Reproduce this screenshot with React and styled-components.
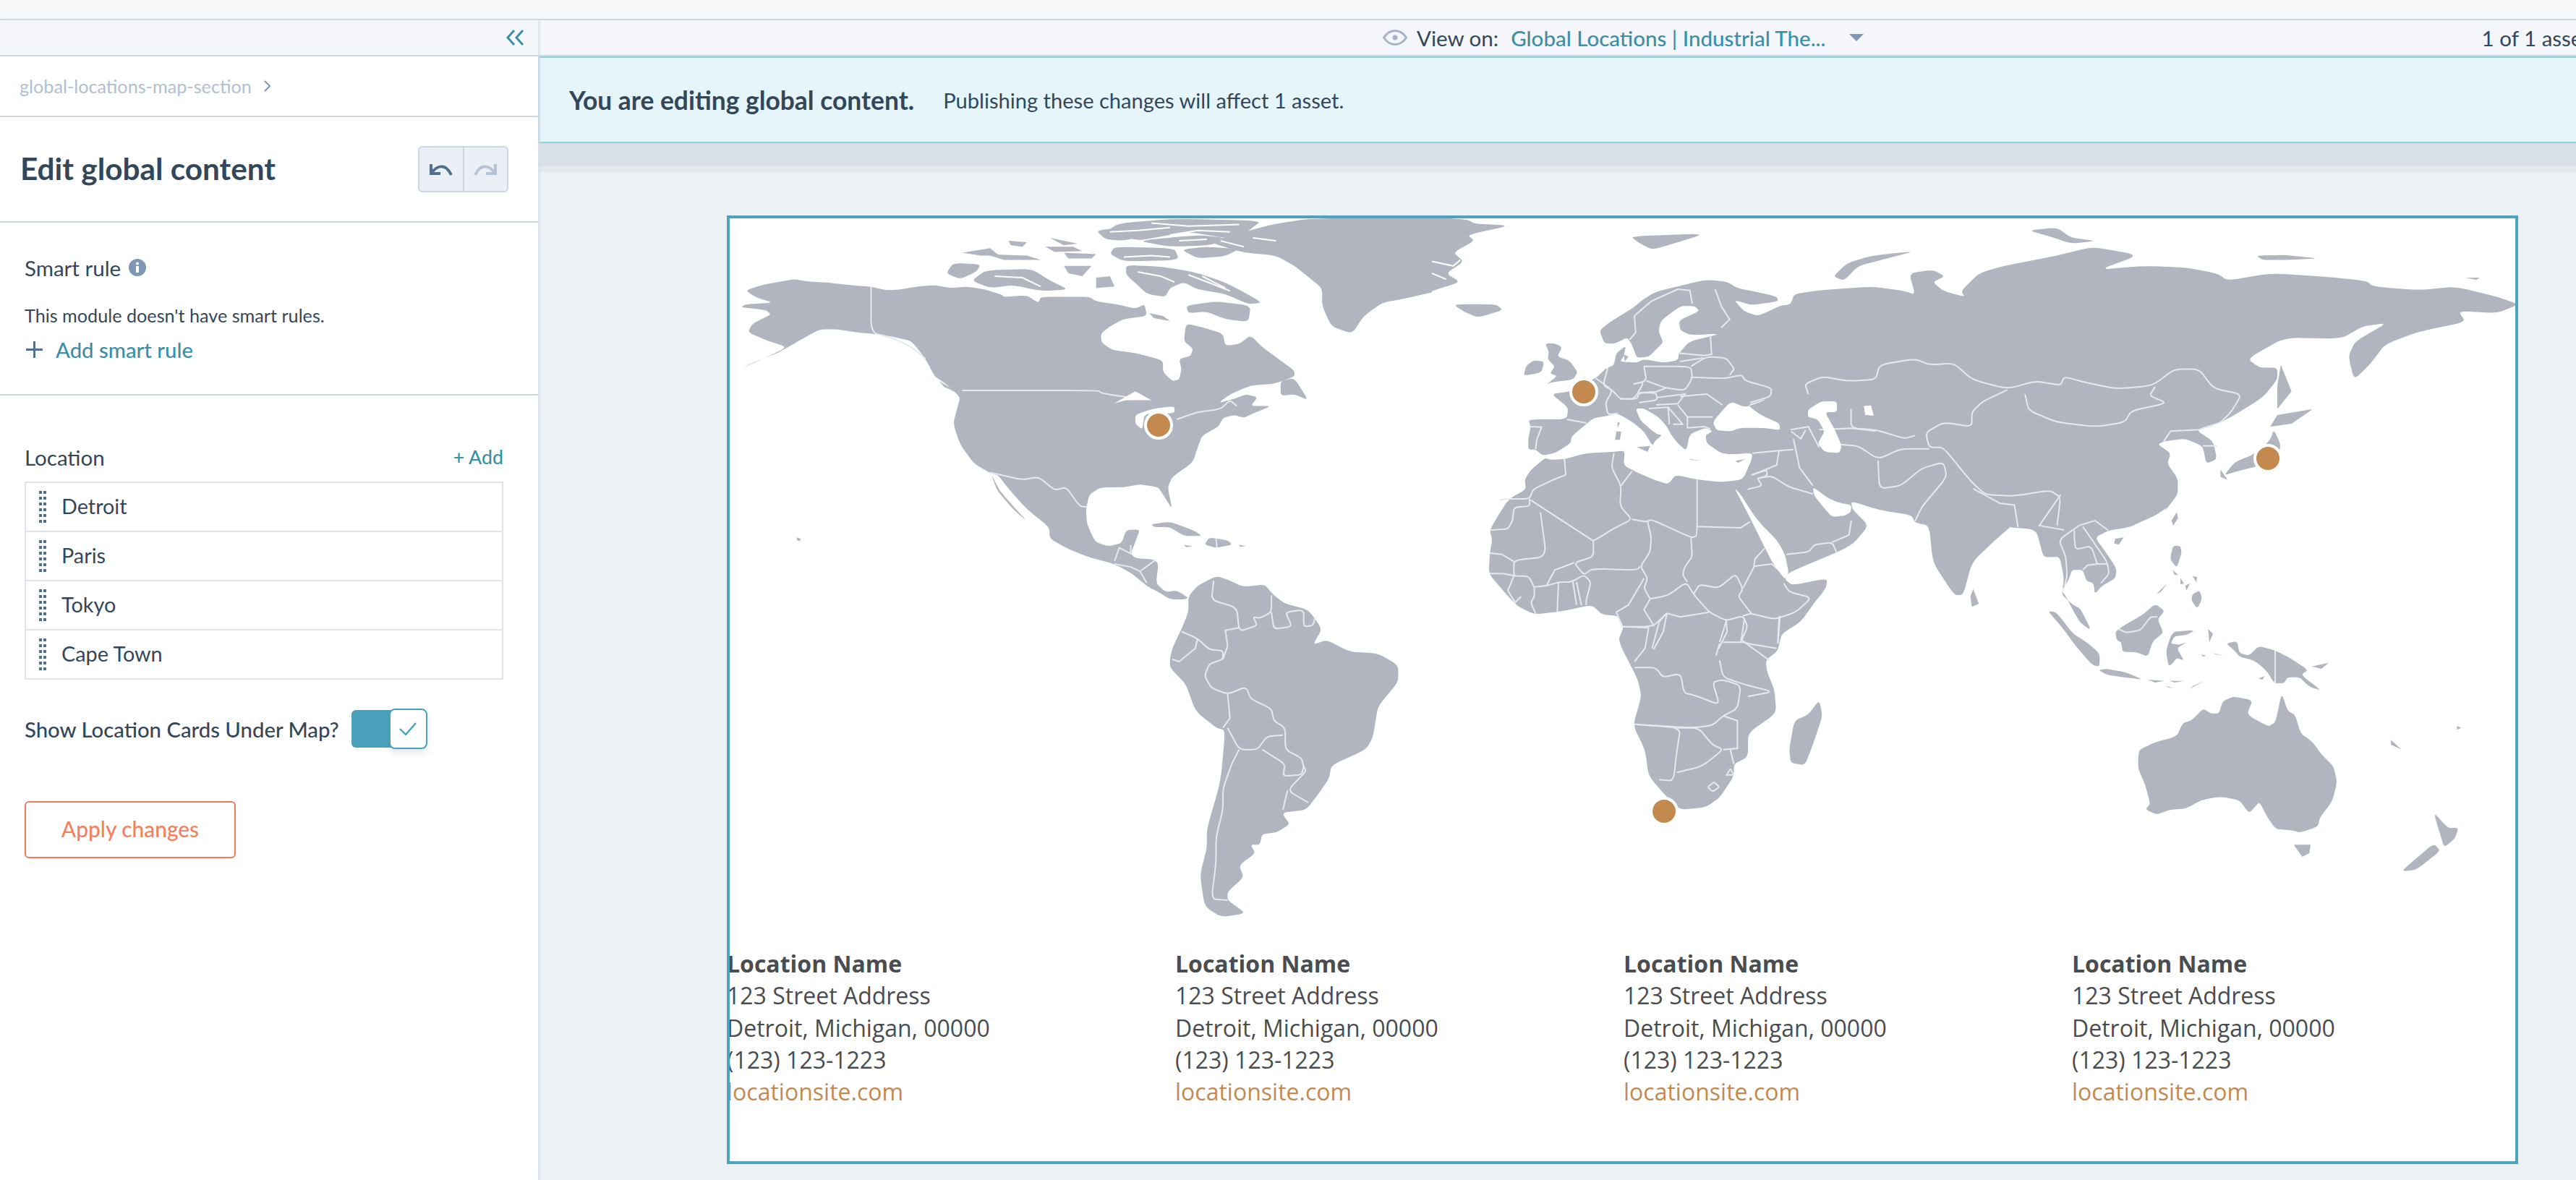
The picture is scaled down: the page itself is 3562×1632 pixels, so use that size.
import React from "react";
import styled, { createGlobalStyle } from "styled-components";

const GlobalStyle = createGlobalStyle`
  html, body {
    margin: 0;
    padding: 0;
    background: #f7f8fa;
    font-family: Lato, "Open Sans", sans-serif;
    color: #33475b;
  }
`;

const Page = styled.div`
  width: 3562px;
  height: 1632px;
  overflow: hidden;
  display: flex;
  flex-direction: column;
`;

const TopStrip = styled.div`
  height: 26px;
  flex: none;
  background: #f7f8fa;
  border-bottom: 2px solid #cbd6e2;
`;

const Body = styled.div`
  flex: 1;
  min-height: 0;
  display: flex;
`;

const Sidebar = styled.aside`
  width: 744px;
  flex: none;
  background: #fff;
  box-shadow: 2px 0 4px #d5dde6;
  position: relative;
  z-index: 2;
`;

const CollapseBar = styled.div`
  height: 48px;
  background: #f5f6fa;
  border-bottom: 2px solid #cbd6e2;
  display: flex;
  align-items: center;
  justify-content: flex-end;
  padding-right: 19px;
`;

const Crumb = styled.div`
  height: 82px;
  border-bottom: 2px solid #cbd6e2;
  display: flex;
  align-items: center;
  gap: 17px;
  padding-left: 27px;
  font-size: 25.2px;
  color: #b0c0d2;
`;

const TitleRow = styled.div`
  height: 144px;
  border-bottom: 2px solid #cbd6e2;
  display: flex;
  align-items: center;
  justify-content: space-between;
  padding: 0 41px 0 28px;
`;

const Title = styled.h1`
  margin: 0 0 3px;
  font-size: 42.3px;
  font-weight: 700;
  color: #33475b;
`;

const HistoryGroup = styled.div`
  display: flex;
  width: 125px;
  height: 64px;
  box-sizing: border-box;
  border: 2px solid #cbd6e2;
  border-radius: 6px;
  background: #eaf0f6;
  overflow: hidden;
`;

const HistoryButton = styled.div`
  flex: 1;
  display: flex;
  align-items: center;
  justify-content: center;
  & + & {
    border-left: 2px solid #cbd6e2;
  }
`;

const SmartSection = styled.section`
  height: 239px;
  box-sizing: border-box;
  padding: 45px 0 0 34px;
  border-bottom: 2px solid #cbd6e2;
`;

const SectionLabel = styled.div`
  display: flex;
  align-items: center;
  gap: 11px;
  height: 34px;
  font-size: 29.5px;
  color: #33475b;
`;

const Hint = styled.div`
  margin-top: 34px;
  height: 30px;
  line-height: 30px;
  font-size: 25.2px;
  color: #33475b;
`;

const AddRule = styled.div`
  margin-top: 17px;
  height: 30px;
  display: flex;
  align-items: center;
  gap: 18px;
  padding-left: 2px;
  font-size: 29.3px;
  font-weight: 500;
  color: #3a8fa9;
`;

const FieldSection = styled.section`
  padding: 69px 48px 0 34px;
`;

const FieldHead = styled.div`
  display: flex;
  align-items: center;
  justify-content: space-between;
  height: 34px;
  box-sizing: border-box;
  padding-bottom: 2px;
  font-size: 29.5px;
`;

const AddLink = styled.span`
  font-size: 26.7px;
  font-weight: 500;
  color: #3a8fa9;
`;

const RepeaterList = styled.div`
  margin-top: 16px;
  border: 2px solid #dfe3eb;
  border-bottom: 0;
`;

const RepeaterRow = styled.div`
  height: 68px;
  box-sizing: border-box;
  display: flex;
  align-items: center;
  gap: 21px;
  padding-left: 18px;
  border-bottom: 2px solid #dfe3eb;
  font-size: 28.8px;
  color: #33475b;
`;

const RowLabel = styled.span`
  margin-bottom: 2px;
`;

const DragHandle = styled.div`
  display: grid;
  grid-template-columns: 4px 4px;
  grid-auto-rows: 4px;
  gap: 4px 2px;
  & > i {
    background: #516f90;
  }
`;

const ToggleRow = styled.div`
  margin-top: 40px;
  display: flex;
  align-items: center;
  gap: 17px;
  height: 56px;
  font-size: 29.3px;
  font-weight: 500;
  color: #33475b;
`;

const Toggle = styled.div`
  position: relative;
  width: 105px;
  height: 52px;
  border-radius: 6px 8px 8px 6px;
  background: linear-gradient(to right, #4ba1bb 60px, transparent 60px);
`;

const ToggleKnob = styled.div`
  position: absolute;
  top: -2px;
  right: 0;
  width: 53px;
  height: 56px;
  box-sizing: border-box;
  background: #fff;
  border: 2px solid #4ba1bb;
  border-radius: 8px;
  box-shadow: 0 6px 10px rgba(45, 62, 80, 0.12);
  display: flex;
  align-items: center;
  justify-content: center;
`;

const ApplyButton = styled.button`
  display: block;
  margin-top: 72px;
  width: 292px;
  height: 79px;
  box-sizing: border-box;
  padding: 0 0 3px;
  background: #fff;
  border: 2px solid #f2795c;
  border-radius: 6px;
  font-family: inherit;
  font-size: 29.9px;
  font-weight: 500;
  color: #f2815f;
`;

const Main = styled.main`
  flex: 1;
  min-width: 0;
  display: flex;
  flex-direction: column;
  background: #ecf1f6;
`;

const Toolbar = styled.div`
  height: 48px;
  flex: none;
  background: #f4f6fa;
  border-bottom: 2px solid #cbd6e2;
  display: flex;
  align-items: center;
  padding-left: 1168px;
  white-space: nowrap;
  font-size: 29.5px;
  overflow: hidden;
  & > * {
    flex: none;
  }
`;

const ViewOn = styled.span`
  margin-left: 13px;
`;

const PageLink = styled.span`
  margin-left: 17px;
  font-weight: 500;
  color: #3a8fa9;
`;

const Caret = styled.span`
  margin-left: 32px;
  width: 0;
  height: 0;
  border-left: 10px solid transparent;
  border-right: 10px solid transparent;
  border-top: 10px solid #7c98b6;
`;

const AssetCount = styled.span`
  margin-left: 855px;
`;

const Banner = styled.div`
  height: 120px;
  flex: none;
  box-sizing: border-box;
  background: #e5f5fa;
  border: 2px solid #8fd0dd;
  border-right: 0;
  display: flex;
  align-items: center;
  gap: 40px;
  padding-left: 41px;
`;

const BannerLead = styled.strong`
  font-size: 35.4px;
  font-weight: 700;
  color: #33475b;
`;

const BannerNote = styled.span`
  font-size: 29.1px;
  color: #33475b;
`;

const BannerShade = styled.div`
  flex: none;
  height: 32px;
  background: #d9e0e8;
  border-bottom: 8px solid #e5e9ef;
`;

const Canvas = styled.div`
  flex: 1;
  min-height: 0;
  padding: 60px 0 0 261px;
`;

const Preview = styled.div`
  position: relative;
  width: 2477px;
  height: 1312px;
  background: #fff;
`;

const EditFrame = styled.div`
  position: absolute;
  inset: 0;
  border: 4px solid #4ba3bd;
  pointer-events: none;
  z-index: 1;
`;

const MapSvg = styled.svg`
  display: block;
  width: 2477px;
  height: 1013px;
`;

const CardGrid = styled.div`
  display: grid;
  grid-template-columns: repeat(4, 620px);
  font-family: "Open Sans", sans-serif;
  font-size: 32px;
  line-height: 44.3px;
  color: #4a4d50;
`;

const CardName = styled.div`
  font-weight: 700;
`;

const CardLink = styled.div`
  color: #c4894f;
`;

// coordinate frames the map outlines were traced in, mapped back to page pixels
const FRAMES = {
  a: { x: 980, sx: 1.568, y: 280, sy: 2.45 },
  b: { x: 980, sx: 1.568, y: 780, sy: 3 },
  c: { x: 1980, sx: 1.018, y: 280, sy: 2.45 },
  d: { x: 1980, sx: 1.018, y: 780, sy: 3 },
  e: { x: 2060, sx: 3, y: 400, sy: 3 },
  f: { x: 2780, sx: 3, y: 700, sy: 3 },
};

const toPoints = (spec) => {
  let frame = null;
  const out = [];
  spec
    .trim()
    .split(/\s+/)
    .forEach((tok) => {
      if (FRAMES[tok]) {
        frame = FRAMES[tok];
        return;
      }
      const [x, y] = tok.split(",").map(Number);
      out.push([frame.x + x / frame.sx, frame.y + y / frame.sy]);
    });
  return out;
};

const fmt = (p) => `${p[0].toFixed(1)} ${p[1].toFixed(1)}`;
const lerp = (a, b, t) => [a[0] + (b[0] - a[0]) * t, a[1] + (b[1] - a[1]) * t];

// rounds the corners a little so traced outlines don't look like straight cuts
const toPath = (spec, closed) => {
  const pts = toPoints(spec);
  const n = pts.length;
  if (n < 5) {
    return `M${pts.map(fmt).join("L")}${closed ? "Z" : ""}`;
  }
  const t = 0.28;
  let d = "";
  pts.forEach((p, i) => {
    const edge = !closed && (i === 0 || i === n - 1);
    if (edge) {
      d += `${i === 0 ? "M" : "L"}${fmt(p)}`;
      return;
    }
    const a = lerp(p, pts[(i - 1 + n) % n], t);
    const b = lerp(p, pts[(i + 1) % n], t);
    d += `${d ? "L" : "M"}${fmt(a)}Q${fmt(p)} ${fmt(b)}`;
  });
  return closed ? `${d}Z` : d;
};

const LAND = [
  // north + central america
  `a 80,298 115,280 150,270 185,260 215,268 260,272 320,282 350,285 385,298 415,295 450,285 490,280 525,290 560,285 600,295 635,312 640,320 690,315 715,340 720,320 790,320 825,320 840,335 885,345 925,360 945,345 950,385 900,395 870,420 850,445 852,475 875,500 925,510 985,535 985,575 1005,605 1020,600 1025,565 1020,530 1045,520 1050,495 1030,470 1035,410 1075,425 1115,445 1120,485 1150,480 1175,450 1200,490 1235,530 1270,570 1270,590 1225,615 1175,620 1130,650 1105,680 1140,665 1165,650 1190,660 1175,690 1220,690 1180,715 1160,730 1140,720 1115,730 1105,760 1070,790 1060,830 1050,880 1005,930 995,965 1005,1040 985,990 975,965 935,955 900,965 850,965 825,990 818,1040 820,1090 838,1150 865,1165 895,1155 905,1110 935,1108 925,1150 915,1190 925,1205 965,1210 975,1225 970,1290 990,1320 1015,1315 1040,1340 1030,1345 1000,1345 975,1320 950,1300 920,1260 880,1225 830,1205 780,1175 740,1140 738,1100 690,1040 650,970 628,925 612,918 575,885 545,820 530,750 540,690 545,660 525,630 510,610 490,590 470,530 440,470 400,455 355,445 320,440 280,430 240,430 200,465 150,510 100,540 70,562 125,525 170,490 130,470 85,440 95,410 135,380 125,365 70,355 80,345 140,340 100,320`,
  `a 612,918 625,975 660,1040 690,1080 655,1020 630,975`,
  // south america
  `b 1040,135 1060,90 1100,50 1125,65 1160,95 1205,85 1225,130 1250,165 1300,190 1330,270 1310,335 1340,315 1390,365 1450,370 1495,420 1495,490 1460,570 1450,600 1440,720 1425,770 1350,835 1345,890 1320,960 1295,1020 1250,1030 1245,1040 1260,1080 1230,1115 1200,1120 1195,1165 1175,1165 1185,1200 1150,1250 1160,1300 1125,1360 1125,1395 1165,1450 1110,1465 1075,1420 1065,1290 1080,1180 1080,1100 1110,900 1120,690 1100,680 1055,610 1035,500 1000,430 1000,395 1005,350 1025,270 1040,200`,
  // arctic canada
  `a 530,205 590,210 580,235 545,260 515,240`,
  `a 600,230 700,225 740,265 780,295 720,300 660,280 610,290 570,265`,
  `a 770,215 830,215 810,250 780,240`,
  `a 840,255 870,250 880,285 840,290`,
  `a 905,212 985,218 1050,235 1110,265 1150,295 1200,340 1170,345 1120,310 1060,295 1030,270 1000,290 990,320 950,310 930,280 905,245`,
  `a 1035,350 1100,335 1175,350 1170,405 1120,395 1080,370 1040,375`,
  `a 955,375 985,385 1000,402 965,392`,
  `a 550,170 610,155 630,180 590,180`,
  `a 600,175 690,180 720,195 640,195`,
  `a 650,130 690,135 680,150 655,145`,
  `a 740,120 800,140 770,145`,
  `a 770,170 840,175 830,190 780,190`,
  `a 840,95 900,85 950,110 900,130 860,125`,
  `a 880,150 1010,155 1020,195 900,200 870,175`,
  `a 930,130 1060,110 1120,120 1090,145 1000,150`,
  `a 890,70 1010,55 1200,62 1170,95 1160,130 1100,115 1040,100 1000,110 930,130 860,100`,
  `a 1025,160 1075,150 1150,158 1120,182 1060,190`,
  `a 730,150 790,150 810,165 750,168`,
  // greenland
  `a 1085,135 1160,170 1230,180 1270,215 1290,240 1330,290 1330,350 1350,420 1395,445 1420,385 1460,340 1510,325 1568,305 c 0,300 40,270 20,240 45,200 30,170 60,130 50,110 110,78 60,72 50,58 0,50 a 1568,54 1480,50 1300,55 1220,75 1150,105`,
  // caribbean + bits
  `a 960,1090 1000,1082 1050,1110 1070,1130 1030,1130 1000,1100 965,1100`,
  `a 1085,1135 1125,1145 1135,1160 1100,1170 1075,1160`,
  `a 1030,1160 1050,1165 1035,1168`,
  `a 1150,1160 1165,1165 1152,1167`,
  `a 190,1135 200,1140 197,1148 192,1145`,
  `a 1240,605 1270,595 1300,670 1270,650 1240,655`,
  `a 500,605 545,650 510,625`,
  // afro-eurasia
  `e 475,225 455,170 500,135 590,80 640,40 690,10 c 345,285 385,262 415,268 430,290 485,318 488,335 450,348 425,330 440,370 460,385 490,350 505,345 510,310 545,298 620,285 665,300 680,312 672,240 705,228 722,250 705,270 720,300 750,320 745,300 770,240 805,215 880,180 930,150 995,178 940,228 1000,215 1060,220 1105,240 1120,265 1180,240 1250,250 1315,265 1325,285 1390,297 1440,285 1500,320 1530,345 1500,375 1445,368 1455,405 1390,437 1342,480 1320,550 1298,600 1290,520 1300,470 1345,408 1310,420 1280,462 1200,458 1148,530 1165,560 1190,560 1190,600 1170,660 1130,720 1110,745 1075,770 1100,810 1105,870 1090,885 1085,825 1060,800 1030,810 1022,820 1040,850 1035,885 1050,935 1050,990 1030,1050 f 650,5 600,40 530,70 500,85 450,95 410,100 350,130 405,205 440,260 435,300 380,330 350,365 345,320 315,310 300,265 255,265 240,310 215,345 215,370 260,410 290,425 335,515 290,485 258,430 230,375 215,355 222,300 205,210 150,212 135,205 110,110 85,95 0,88 c 814,1100 790,1150 760,1220 748,1330 735,1330 705,1220 700,1095 680,1085 675,1060 630,1042 590,1012 592,1040 615,1095 590,1165 502,1254 e 1225,1205 1255,1228 1400,1200 1395,1240 1340,1310 1290,1380 1210,1430 1195,1500 d 470,400 472,450 482,520 485,620 445,700 445,800 425,830 425,880 405,970 385,1010 350,1020 330,965 305,880 300,770 283,670 295,550 290,480 262,320 270,260 262,215 240,210 225,170 185,195 145,210 120,175 100,110 80,40 e 0,1100 10,1040 0,1000 40,930 80,870 150,830 145,790 170,750 230,700 250,708 310,705 400,680 510,675 560,670 555,730 600,755 680,790 740,810 770,770 860,790 960,800 1050,790 1085,710 1090,680 1000,685 960,680 900,640 895,605 925,590 895,575 830,600 815,670 780,640 750,600 735,570 700,530 640,495 605,495 625,545 690,600 715,605 685,630 675,650 640,590 590,550 530,515 490,525 430,535 400,560 340,610 335,640 270,680 220,690 190,665 160,665 160,620 170,570 160,540 320,540 325,490 255,435 330,425 350,405 440,370 480,330 515,315 525,265 565,235 555,280 540,300 610,305 640,290 720,305 780,295 785,265 830,215 960,185 830,190 790,170 785,130 870,90 850,70 790,70 710,130 700,175 720,220 690,250 660,280 610,285 590,230 570,200 520,225`,
  // europe islands
  `e 230,225 270,225 300,240 280,280 330,295 365,345 345,375 260,385 235,395 280,360 250,350 270,320 240,290 245,260`,
  `e 180,295 225,300 215,345 140,360 150,320`,
  `e 525,590 545,590 540,625 520,625`,
  `e 530,550 540,555 530,575`,
  `e 610,655 665,650 655,675`,
  `e 830,705 880,712 830,708`,
  `e 1020,712 1060,705 1030,720`,
  `e 555,270 575,280 560,300`,
  `c 30,345 90,345 100,365 65,390 45,370`,
  `c 280,115 385,105 340,140 310,160 290,135`,
  `c 680,165 620,180 585,205 565,250 580,265 600,215 640,190`,
  `c 840,95 880,85 900,120 935,130 900,140 870,115`,
  `c 1160,180 1200,178 1250,190 1200,195 1170,195`,
  `c 1455,255 1475,255 1470,262`,
  // asia islands
  `c 1195,550 1210,640 1190,700 1190,620`,
  `c 1190,720 1240,700 1210,750 1180,760`,
  `c 1185,770 1195,820 1190,880 1160,895 1135,910 1115,925 1130,880 1160,850 1180,805`,
  `c 1110,905 1120,940 1110,930`,
  `c 762,1310 770,1360 760,1370 758,1335`,
  `f 690,25 695,50 675,80 668,60`,
  `f 435,135 470,130 450,160 430,155`,
  `f 675,165 705,165 710,195 690,255 665,225 665,205`,
  `f 755,365 785,350 795,385 775,425 750,390`,
  `f 605,365 650,320 625,355`,
  `f 672,265 695,285 680,285`,
  `f 705,300 720,320 705,325`,
  `f 755,290 775,295 770,315`,
  `f 725,330 745,320 730,350`,
  `f 155,435 190,440 260,530 310,560 370,610 370,665 340,660 270,580 220,510`,
  `f 435,520 480,490 550,450 600,405 640,435 610,470 635,525 590,560 570,625 520,605 465,605 460,565 440,555`,
  `f 665,540 680,520 765,515 730,535 680,540 665,570 700,575 730,565 690,590 720,640 690,630 665,660 655,660 645,600`,
  `f 365,680 400,675 480,690 550,720 470,710 400,700`,
  `f 570,720 640,725 600,732`,
  `f 660,725 720,725 680,732`,
  `f 740,760 805,725 760,745`,
  `f 645,745 675,755 655,752`,
  `f 895,570 940,560 950,610 990,620 1030,580 1100,600 1160,630 1235,680 1205,700 1290,765 1240,750 1200,710 1150,710 1135,735 1095,735 1060,680 1010,640 950,625 930,600`,
  `f 840,610 885,620 850,615`,
  `f 790,615 810,620 800,625`,
  `f 820,510 840,530 825,565`,
  `f 1250,665 1320,650 1290,675`,
  `f 1030,715 1055,705 1045,720`,
  // australia + nz
  `f 535,1010 600,980 690,955 715,900 750,890 800,840 830,860 865,860 880,810 925,790 1005,805 980,865 1070,915 1100,895 1125,775 1150,850 1180,865 1205,945 1250,975 1290,1030 1340,1080 1355,1145 1335,1225 1285,1290 1275,1330 1200,1355 1170,1345 1100,1340 1065,1290 1040,1240 1030,1230 990,1275 950,1220 870,1205 790,1220 730,1255 660,1260 605,1280 560,1258 580,1235 560,1160 530,1090 530,1040`,
  `f 1175,1405 1245,1405 1240,1440 1210,1455`,
  `d 1410,1030 1430,1095 1445,1095 1440,1140 1425,1175 1420,1130`,
  `d 1410,1160 1420,1190 1385,1270 1365,1275 1380,1235`,
  `d 1350,730 1365,770 1350,750`,
  `d 1443,672 1449,680 1443,688`,
  // madagascar
  `d 545,565 550,630 535,760 525,835 505,825 503,770 510,650 530,625`,
];

const WATER = [
  `e 925,550 990,475 1010,470 1060,490 1130,465 1150,455 1070,480 1100,505 1140,530 1200,555 1205,585 1130,575 1040,575 1000,590 940,585`,
  `e 1320,500 1375,465 1440,465 1440,510 1390,510 1430,580 1460,650 1450,680 1390,675 1360,640 1390,590 1360,540 1320,530`,
  `e 1015,825 1040,850 1090,930 1130,980 1190,1040 1225,1100 1240,1175 1225,1205 1170,1130 1130,1050 1100,990 1060,910`,
  `e 1340,820 1400,865 1445,885 1500,895 1498,925 1470,940 1420,945 1380,900 1345,855`,
  `a 880,680 925,640 960,670 905,670`,
  `a 925,720 960,700 1010,690 1010,715 945,715 940,770 925,750`,
  `c 608,690 618,688 622,722 610,720`,
  `a 1040,315 1060,310 1060,322 1042,325`,
];

// thin fjords and channels across the arctic islands and the greenland coast
const FJORDS = [
  `a 870,100 930,95 1000,85`,
  `a 960,70 1040,80 1150,75`,
  `a 1000,110 1060,95 1130,100`,
  `a 1020,130 1080,125`,
  `a 900,185 960,180 1000,185`,
  `a 930,235 980,250 1010,270`,
  `a 1040,245 1090,275 1130,300`,
  `a 1070,250 1120,290`,
  `a 620,250 680,255 720,285`,
  `a 1285,250 1310,270 1325,300`,
  `a 1290,285 1320,320 1330,370`,
  `a 1300,330 1325,375`,
  `a 1110,130 1160,150`,
  `a 1180,120 1230,130`,
  `c 0,200 30,215 40,195`,
  `c 0,240 20,260`,
];

const BORDERS = [
  // africa
  `e 315,770 265,790 180,830 165,870 70,870 40,875`,
  `e 165,870 165,900 100,905 95,960 75,995 0,1000`,
  `e 170,875 415,1035 430,1045 520,990 590,955 540,900 545,815 505,740 515,680`,
  `e 545,815 590,755`,
  `e 310,705 315,770`,
  `e 210,925 235,1110 100,1125 100,1180 105,1190`,
  `e 0,1095 50,1100 100,1130`,
  `e 0,1180 60,1180 105,1190 160,1190 185,1235 185,1275 170,1300 190,1345`,
  `e 100,1190 75,1250 105,1300 130,1275`,
  `e 590,955 650,965 670,955 835,1030 860,1025 860,790`,
  `e 860,985 1040,990 1080,965`,
  `e 835,1030 840,1110 810,1150 800,1185 820,1215`,
  `e 655,965 670,1030 665,1090 625,1150 655,1200 640,1240 665,1285`,
  `e 430,1045 430,1110 350,1135 390,1185 425,1160 610,1165 625,1150`,
  `e 350,1135 270,1165 235,1230 185,1235`,
  `e 235,1230 290,1215 340,1215 390,1185 420,1215 400,1290 400,1310`,
  `e 345,1215 360,1310`,
  `e 360,1215 380,1310`,
  `e 285,1215 280,1340`,
  `e 640,1200 575,1310 525,1340 550,1400`,
  `e 665,1285 640,1330 680,1395`,
  `e 665,1285 740,1270 815,1215 845,1265 910,1340 980,1375 1050,1355 1070,1400 1040,1465 1190,1490`,
  `e 845,1265 870,1225 950,1240 1020,1180 1050,1245 1030,1275 1085,1345`,
  `e 680,1395 735,1345 790,1360 910,1340`,
  `e 1140,1075 1100,1120 1095,1155 1050,1240`,
  `e 1095,1150 1170,1140 1225,1190`,
  `e 1220,1220 1240,1255 1335,1280 1270,1340 1180,1370 1085,1345 1050,1355`,
  `e 1200,1360 1195,1465`,
  `e 980,1375 985,1420 950,1490`,
  `e 735,1345 720,1420 680,1495`,
  `e 550,1400 640,1400 680,1395`,
  // middle east
  `e 1090,680 1200,670 1260,665`,
  `e 1260,620 1285,740 1340,815`,
  `e 1200,670 1190,730 1090,770`,
  `e 1085,770 1150,750 1150,775 1110,785 1130,815 1070,830`,
  `e 1110,785 1170,775 1240,820 1310,840 1340,850`,
  `e 1230,1100 1325,1090 1345,1060 1420,1050 1440,1095`,
  `e 1420,1050 1490,1020 1500,960`,
  `e 1250,590 1290,620 1310,585`,
  // europe
  `e 320,540 400,555`,
  `e 165,570 215,572 195,625 190,665`,
  `e 440,370 510,420 480,470 490,520 530,515`,
  `e 490,325 470,400 510,420 540,455 600,455 640,385 590,395 650,380 640,320`,
  `e 640,320 835,320 840,370 810,420 730,410 650,380`,
  `e 730,410 690,425 620,430`,
  `e 540,455 610,455 620,430 690,430 695,460 620,470`,
  `e 690,450 810,435 780,475 690,480`,
  `e 790,445 900,435 965,480`,
  `e 780,480 820,530 925,530`,
  `e 840,365 975,370 1045,355 1060,380 1170,410 1165,445 1080,470`,
  `e 835,320 900,280 980,285 1015,330 995,355`,
  `e 780,265 890,275 920,270 915,190`,
  `e 790,300 885,285`,
  `e 660,495 740,490 800,560 760,560`,
  `e 820,530 820,575 890,570 915,580`,
  `e 740,490 745,560`,
  `e 935,0 960,70 995,125 960,160`,
  `e 600,110 605,180 580,210`,
  `e 600,110 670,50 780,0`,
  `e 780,0 830,5 840,60`,
  // asia
  `c 530,650 525,615 550,590 585,605 625,600 630,550 680,530 700,550 735,545 760,600 810,632 850,605 885,620 890,590 920,610 965,632 1015,620 1045,565 1080,565 1100,630 1140,650 1125,710 1110,745`,
  `c 810,635 775,675 760,710 760,760 720,745 695,780 700,830 720,830 750,920 765,960 780,990 820,995 870,975 885,1000 880,1095`,
  `c 835,650 840,705 880,745 935,760 975,745 985,705 1035,680 1010,655 1018,625`,
  `c 590,700 590,765 625,770 665,800 680,790`,
  `c 575,820 600,825 628,870 660,835 700,835`,
  `c 628,875 630,970 660,960 690,900 720,880 725,930 690,1030 680,1080`,
  `c 762,970 800,1020 820,1025 825,1100`,
  `c 885,990 855,1095 890,1110`,
  `c 1110,745 1080,770 1040,775 1030,810`,
  `c 1085,825 1105,825`,
  `c 545,830 530,760 505,770`,
  `c 625,775 590,765 545,770`,
  `f 285,80 200,140 230,210 235,290 225,330`,
  `f 265,100 265,130 270,180 335,165 360,240`,
  `f 300,85 335,135 400,230 410,280 375,320`,
  `f 300,265 320,245 360,240 400,240`,
  `f 285,80 350,60 405,100`,
  `f 450,510 480,525 540,515 580,460 610,460`,
  `f 1098,600 1098,735`,
  // americas
  `a 352,285 352,440 400,460 440,490 470,530`,
  `a 550,637 845,637 850,645 885,655 935,665`,
  `a 1015,735 1060,710 1110,700 1130,670 1145,690`,
  `a 610,915 680,940 715,930 750,975 775,965 805,1030 820,1032`,
  `a 880,1215 890,1170 915,1190 915,1160`,
  `a 880,1225 915,1235 935,1250 970,1210`,
  `a 935,1250 950,1290`,
  `a 1100,1140 1102,1170`,
  `b 1095,70 1090,150 1145,180 1150,280 1190,255 1180,220 1195,225 1220,200 1220,130`,
  `b 1220,200 1225,270 1265,260 1250,200 1290,190 1290,260 1310,255 1315,220`,
  `b 1025,280 1060,310 1085,355 1115,360 1115,395 1085,415 1075,465 1090,515 1125,540 1165,510 1175,560 1220,600 1225,650 1250,680 1250,770 1285,805 1290,840 1295,860 1255,940 1300,990`,
  `b 1150,265 1120,275 1125,340 1115,395`,
  `b 1060,310 1055,350 1020,405 1005,395`,
  `b 1125,540 1130,640 1115,680`,
  `b 1125,680 1150,770 1190,770 1210,715 1245,710`,
  `b 1200,770 1250,830 1245,880 1285,875 1290,840`,
  `b 1150,770 1135,825 1115,930 1115,1020 1100,1130 1100,1240 1090,1390 1125,1395`,
  `b 1255,940 1245,1020`,
  // southern africa
  `d 285,430 315,430 325,470 350,455 355,535 370,545 405,585 395,490 410,480 435,505 430,600 410,630 395,670 365,680 285,665`,
  `d 285,665 350,680 345,770 340,900 320,895`,
  `d 345,680 375,680 395,750 410,770 380,840 345,865`,
  `d 410,770 430,765 430,650 410,630`,
  `d 410,325 440,325 475,400`,
  `d 405,400 410,470 440,500 480,530 445,550`,
  `d 405,330 400,380`,
  `d 270,260 305,265 300,350 285,405`,
  `d 330,205 320,240 310,350`,
  `d 425,830 420,770`,
  `d 397,905 405,925 395,945 388,925 397,905`,
  `d 420,850 425,875 415,875 420,850`,
  `d 415,230 405,325`,
  `d 440,225 435,325`,
  `d 490,215 487,330`,
];

const MARKERS = [
  { x: 1602, y: 588 },
  { x: 2190, y: 542 },
  { x: 3136, y: 634 },
  { x: 2301, y: 1122 },
];

const WorldMap = () => (
  <MapSvg viewBox="1005 298 2477 1013" aria-label="World map">
    {LAND.map((spec, i) => (
      <path key={i} d={toPath(spec, true)} fill="#b0b5bf" />
    ))}
    {BORDERS.map((spec, i) => (
      <path key={i} d={toPath(spec, false)} fill="none" stroke="#e6e9ee" strokeWidth="2" />
    ))}
    {WATER.map((spec, i) => (
      <path key={i} d={toPath(spec, true)} fill="#fff" />
    ))}
    {FJORDS.map((spec, i) => (
      <path key={i} d={toPath(spec, false)} fill="none" stroke="#fff" strokeWidth="2" />
    ))}
    {MARKERS.map((m) => (
      <circle key={m.x} cx={m.x} cy={m.y} r="18" fill="#c4894f" stroke="#fff" strokeWidth="4" />
    ))}
  </MapSvg>
);

const CollapseIcon = () => (
  <svg width="25" height="22" viewBox="0 0 25 22" fill="none" stroke="#3a8fa9" strokeWidth="3">
    <path d="M11 1 2 11l9 10M23 1l-9 10 9 10" />
  </svg>
);

const Chevron = () => (
  <svg width="9" height="16" viewBox="0 0 9 16" fill="none" stroke="#7c98b6" strokeWidth="2">
    <path d="M1 1l7 7-7 7" />
  </svg>
);

const UndoIcon = ({ color, flip }) => (
  <svg
    width="32"
    height="17"
    viewBox="0 0 32 17"
    fill="none"
    stroke={color}
    strokeWidth="4"
    style={flip ? { transform: "scaleX(-1)" } : undefined}
  >
    <path d="M2 1v13h13M3 13C10 3 22 -1 30 16" />
  </svg>
);

const InfoIcon = () => (
  <svg width="24" height="24" viewBox="0 0 24 24">
    <circle cx="12" cy="12" r="12" fill="#7c98b6" />
    <circle cx="12" cy="6.5" r="2" fill="#fff" />
    <rect x="10" y="10" width="4" height="9" fill="#fff" />
  </svg>
);

const PlusIcon = () => (
  <svg width="23" height="23" viewBox="0 0 23 23" stroke="#516f90" strokeWidth="3">
    <path d="M11.5 0v23M0 11.5h23" />
  </svg>
);

const CheckIcon = () => (
  <svg width="24" height="18" viewBox="0 0 24 18" fill="none" stroke="#4ba1bb" strokeWidth="2.4">
    <path d="M1 9l8 8L23 1" />
  </svg>
);

const EyeIcon = () => (
  <svg width="34" height="22" viewBox="0 0 34 22" fill="none" stroke="#a5b3c8" strokeWidth="3">
    <path d="M1.5 11C6 4 11 1.5 17 1.5S28 4 32.5 11C28 18 23 20.5 17 20.5S6 18 1.5 11Z" />
    <circle cx="17" cy="11" r="3.5" fill="#a5b3c8" stroke="none" />
  </svg>
);

const LOCATIONS = ["Detroit", "Paris", "Tokyo", "Cape Town"];

const App = () => {
  return (
    <Page>
      <GlobalStyle />
      <TopStrip />
      <Body>
        <Sidebar>
          <CollapseBar>
            <CollapseIcon />
          </CollapseBar>
          <Crumb>
            global-locations-map-section
            <Chevron />
          </Crumb>
          <TitleRow>
            <Title>Edit global content</Title>
            <HistoryGroup>
              <HistoryButton>
                <UndoIcon color="#516f90" />
              </HistoryButton>
              <HistoryButton>
                <UndoIcon color="#b6c3d5" flip />
              </HistoryButton>
            </HistoryGroup>
          </TitleRow>
          <SmartSection>
            <SectionLabel>
              Smart rule
              <InfoIcon />
            </SectionLabel>
            <Hint>This module doesn't have smart rules.</Hint>
            <AddRule>
              <PlusIcon />
              Add smart rule
            </AddRule>
          </SmartSection>
          <FieldSection>
            <FieldHead>
              Location
              <AddLink>+ Add</AddLink>
            </FieldHead>
            <RepeaterList>
              {LOCATIONS.map((name) => (
                <RepeaterRow key={name}>
                  <DragHandle>
                    {Array.from({ length: 12 }, (_, i) => (
                      <i key={i} />
                    ))}
                  </DragHandle>
                  <RowLabel>{name}</RowLabel>
                </RepeaterRow>
              ))}
            </RepeaterList>
            <ToggleRow>
              Show Location Cards Under Map?
              <Toggle>
                <ToggleKnob>
                  <CheckIcon />
                </ToggleKnob>
              </Toggle>
            </ToggleRow>
            <ApplyButton>Apply changes</ApplyButton>
          </FieldSection>
        </Sidebar>
        <Main>
          <Toolbar>
            <EyeIcon />
            <ViewOn>View on:</ViewOn>
            <PageLink>Global Locations | Industrial The...</PageLink>
            <Caret />
            <AssetCount>1 of 1 assets</AssetCount>
          </Toolbar>
          <Banner>
            <BannerLead>You are editing global content.</BannerLead>
            <BannerNote>Publishing these changes will affect 1 asset.</BannerNote>
          </Banner>
          <BannerShade />
          <Canvas>
            <Preview>
              <EditFrame />
              <WorldMap />
              <CardGrid>
                {[0, 1, 2, 3].map((i) => (
                  <div key={i}>
                    <CardName>Location Name</CardName>
                    <div>123 Street Address</div>
                    <div>Detroit, Michigan, 00000</div>
                    <div>(123) 123-1223</div>
                    <CardLink>locationsite.com</CardLink>
                  </div>
                ))}
              </CardGrid>
            </Preview>
          </Canvas>
        </Main>
      </Body>
    </Page>
  );
};

export default App;
